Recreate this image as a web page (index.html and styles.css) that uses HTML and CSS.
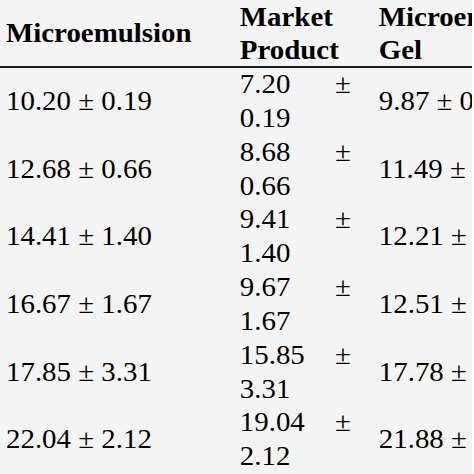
FILE: index.html
```html
<!DOCTYPE html>
<html lang="en">
<head>
<meta charset="utf-8">
<title>Release table</title>
<link rel="stylesheet" href="styles.css">
</head>
<body>
<div class="sheet">
  <div class="table">
    <div class="row head">
      <div class="cell c1">Microemulsion</div>
      <div class="cell c2">Market Product</div>
      <div class="cell c3">Microemulsion Gel</div>
    </div>
    <div class="row">
      <div class="cell c1">10.20 ± 0.19</div>
      <div class="cell c2">7.20 ± 0.19</div>
      <div class="cell c3">9.87 ± 0.21</div>
    </div>
    <div class="row">
      <div class="cell c1">12.68 ± 0.66</div>
      <div class="cell c2">8.68 ± 0.66</div>
      <div class="cell c3">11.49 ± 0.52</div>
    </div>
    <div class="row">
      <div class="cell c1">14.41 ± 1.40</div>
      <div class="cell c2">9.41 ± 1.40</div>
      <div class="cell c3">12.21 ± 1.12</div>
    </div>
    <div class="row">
      <div class="cell c1">16.67 ± 1.67</div>
      <div class="cell c2">9.67 ± 1.67</div>
      <div class="cell c3">12.51 ± 1.35</div>
    </div>
    <div class="row">
      <div class="cell c1">17.85 ± 3.31</div>
      <div class="cell c2">15.85 ± 3.31</div>
      <div class="cell c3">17.78 ± 2.41</div>
    </div>
    <div class="row">
      <div class="cell c1">22.04 ± 2.12</div>
      <div class="cell c2">19.04 ± 2.12</div>
      <div class="cell c3">21.88 ± 1.96</div>
    </div>
  </div>
</div>
</body>
</html>
```
FILE: styles.css
```css
html, body {
  margin: 0;
  padding: 0;
  background: #ffffff;
}

.sheet {
  width: 472px;
  height: 474px;
  overflow: hidden;
  background: #f4f4f4;
  color: #000000;
  font-family: "Liberation Serif", "Times New Roman", serif;
}

/* the source table is set slightly wide: stretch glyphs horizontally */
.table {
  width: 540px;
  transform: scaleX(1.09);
  transform-origin: 0 0;
}

.row {
  display: grid;
  grid-template-columns: 220px 127.5px 185px;
  align-items: center;
  font-size: 26.5px;
  line-height: 33.85px;
  text-align: justify;
}

.row.head {
  font-weight: bold;
  font-size: 26.5px;
  line-height: 32.5px;
  padding-top: 1px;
  border-bottom: 2px solid #1a1a1a;
  text-align: left;
}

.cell.c1 {
  padding-left: 5.5px;
}

.cell.c2 {
  padding-right: 25.7px;
}
```
